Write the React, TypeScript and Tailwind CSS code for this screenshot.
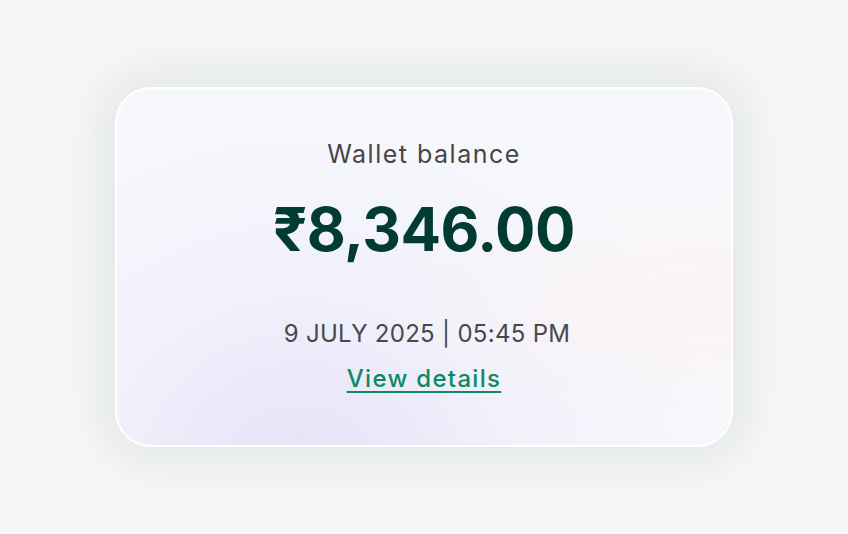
import React from "react";

export default function App() {
  return (
    <div className="flex h-[534px] w-[848px] items-center justify-center bg-[#f6f6f6]" style={{ fontFamily: "Inter, 'Noto Sans', sans-serif" }}>
      <div className="relative flex h-[360px] w-[618px] flex-col items-center overflow-hidden rounded-[36px] border-2 border-white bg-[#f7f8fc] shadow-[0_0_50px_12px_rgba(40,100,90,0.10)]">
        <div className="pointer-events-none absolute inset-0 bg-[radial-gradient(ellipse_at_30%_110%,rgba(228,225,248,1),rgba(238,236,250,0.6)_35%,transparent_70%)]" />
        <div className="pointer-events-none absolute inset-0 bg-[radial-gradient(ellipse_at_100%_60%,rgba(252,242,242,0.8),transparent_40%)]" />
        <div className="relative flex flex-col items-center">
          <div className="mt-[50px] text-[25px] leading-[30px] tracking-[1.5px] text-[#464646]">Wallet balance</div>
          <div className="mt-[24px] text-[60px] font-bold leading-[72px] tracking-[-0.5px] text-[#023b31]">₹8,346.00</div>
          <div className="ml-[6px] mt-[54px] text-[24px] leading-[30px] tracking-[0.3px] text-[#48484f]">9 JULY 2025 | 05:45 PM</div>
          <a href="#" className="mt-[15px] text-[24px] font-medium leading-[30px] tracking-[1.3px] text-[#0b8a63] underline decoration-[1.5px] underline-offset-[4px]">View details</a>
        </div>
      </div>
    </div>
  );
}
